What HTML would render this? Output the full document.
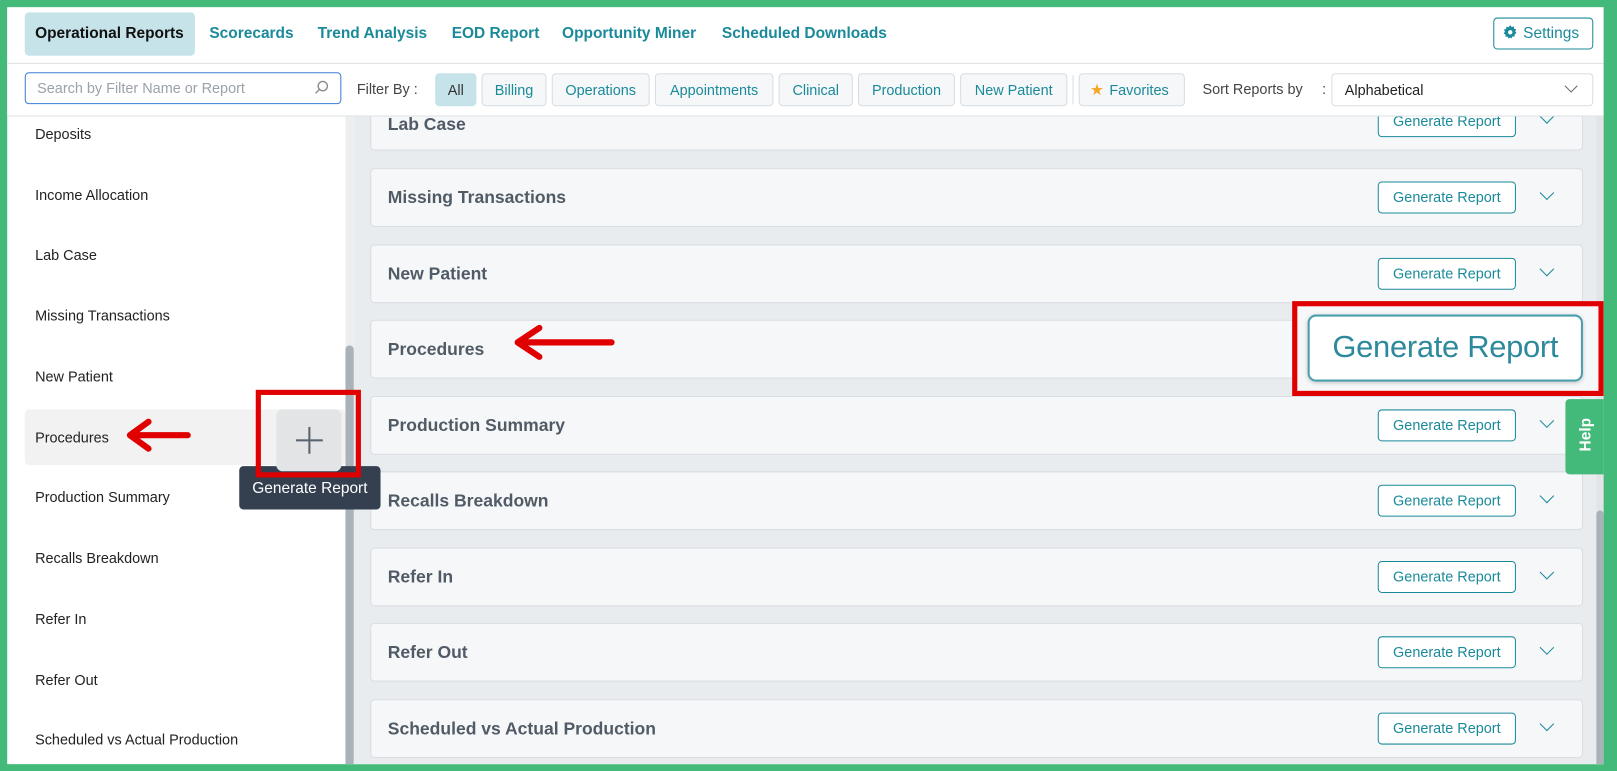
<!DOCTYPE html>
<html><head><meta charset="utf-8"><style>
*{box-sizing:border-box;margin:0;padding:0}
html,body{width:1617px;height:771px;overflow:hidden;background:#43b97a;font-family:"Liberation Sans",Arial,sans-serif}
#w{position:absolute;left:0;top:0;width:1568px;height:748px;transform:scale(1.03125);transform-origin:0 0;background:#43b97a}
.a{position:absolute}
.tab{position:absolute;top:12px;height:42px;line-height:42px;font-weight:bold;font-size:15px;color:#1a8a9a;white-space:nowrap}
.chip{position:absolute;top:71px;height:32px;line-height:30px;border:1px solid #d6dde2;border-radius:4px;background:#f5f7f8;color:#1a8a9a;font-size:14px;text-align:center}
.si{position:absolute;left:34px;font-size:14px;color:#222}
.card{position:absolute;left:359px;width:1176px;height:57px;background:#f6f7f9;border:1px solid #d8dde2;border-radius:4px}
.card .t{position:absolute;left:16px;top:0;line-height:55px;font-size:17px;font-weight:bold;color:#505b66}
.card .b{position:absolute;left:976px;top:12px;width:134px;height:31px;border:1px solid #1a8a9a;border-radius:4px;background:#fff;color:#1a8a9a;font-size:14px;line-height:29px;text-align:center}
.card .c{position:absolute;left:1135px;top:18px;width:10px;height:10px;border-right:1.5px solid #1a8a9a;border-bottom:1.5px solid #1a8a9a;transform:rotate(45deg)}
</style></head><body><div id="w">
<div class="a" style="left:7px;top:7px;width:1548px;height:734px;overflow:hidden;background:#fff">
<div class="a" style="left:-7px;top:-7px;width:1568px;height:748px">
 <div class="a" style="left:343px;top:113px;width:1212px;height:630px;background:#e9ecef"></div>
 <div class="a" style="left:335px;top:113px;width:8px;height:630px;background:#eceef0"></div>
 <div class="a" style="left:335px;top:335px;width:8px;height:410px;background:#a9b1b9;border-radius:4px"></div>
 <div class="a" style="left:1548px;top:113px;width:7px;height:630px;background:#e2e5e8"></div>
 <div class="a" style="left:1548px;top:495px;width:7px;height:250px;background:#a9b1b9;border-radius:4px"></div>

 <div class="a" style="left:24px;top:397px;width:311px;height:54px;background:#f2f2f2;border-radius:4px"></div>
 <div class="si" style="top:122px">Deposits</div>
 <div class="si" style="top:181px">Income Allocation</div>
 <div class="si" style="top:239px">Lab Case</div>
 <div class="si" style="top:298px">Missing Transactions</div>
 <div class="si" style="top:357px">New Patient</div>
 <div class="si" style="top:416px">Procedures</div>
 <div class="si" style="top:474px">Production Summary</div>
 <div class="si" style="top:533px">Recalls Breakdown</div>
 <div class="si" style="top:592px">Refer In</div>
 <div class="si" style="top:651px">Refer Out</div>
 <div class="si" style="top:709px">Scheduled vs Actual Production</div>

 <div class="card" style="top:89px"><div class="t" style="top:3px">Lab Case</div><div class="b">Generate Report</div><div class="c"></div></div>
 <div class="card" style="top:163px"><div class="t">Missing Transactions</div><div class="b">Generate Report</div><div class="c"></div></div>
 <div class="card" style="top:237px"><div class="t">New Patient</div><div class="b">Generate Report</div><div class="c"></div></div>
 <div class="card" style="top:310px"><div class="t">Procedures</div></div>
 <div class="card" style="top:384px"><div class="t">Production Summary</div><div class="b">Generate Report</div><div class="c"></div></div>
 <div class="card" style="top:457px"><div class="t">Recalls Breakdown</div><div class="b">Generate Report</div><div class="c"></div></div>
 <div class="card" style="top:531px"><div class="t">Refer In</div><div class="b">Generate Report</div><div class="c"></div></div>
 <div class="card" style="top:604px"><div class="t">Refer Out</div><div class="b">Generate Report</div><div class="c"></div></div>
 <div class="card" style="top:678px"><div class="t">Scheduled vs Actual Production</div><div class="b">Generate Report</div><div class="c"></div></div>

 <!-- header -->
 <div class="a" style="left:7px;top:7px;width:1548px;height:105px;background:#fff"></div>
 <div class="a" style="left:24px;top:12px;width:165px;height:42px;background:#c5e3e8;border-radius:4px"></div>
 <div class="tab" style="left:34px;color:#111">Operational Reports</div>
 <div class="tab" style="left:203px">Scorecards</div>
 <div class="tab" style="left:308px">Trend Analysis</div>
 <div class="tab" style="left:438px">EOD Report</div>
 <div class="tab" style="left:545px">Opportunity Miner</div>
 <div class="tab" style="left:700px">Scheduled Downloads</div>
 <div class="a" style="left:1448px;top:17px;width:97px;height:31px;border:1px solid #1a8a9a;border-radius:4px;color:#1a8a9a;font-size:15px;line-height:29px;padding-left:28px">Settings</div>
 <svg class="a" style="left:1457px;top:24px" width="15" height="15" viewBox="0 0 16 16"><path d="M8 0.5l1.4 1.8 2.2-.6.3 2.3 2.2.8-1 2.1 1.4 1.8-2 1.1.1 2.3-2.3-.1-.9 2.1L8 13l-1.8 1.4-.9-2.1-2.3.1.1-2.3-2-1.1 1.4-1.8-1-2.1 2.2-.8.3-2.3 2.2.6z" fill="#1a8a9a"/><circle cx="8" cy="7.8" r="2.3" fill="#fff"/></svg>
 <div class="a" style="left:7px;top:61px;width:1548px;height:1px;background:#dde2e6"></div>
 <div class="a" style="left:24px;top:70px;width:307px;height:31px;border:1px solid #3b7dd8;border-radius:4px;font-size:14px;color:#9aa2aa;line-height:29px;padding-left:11px">Search by Filter Name or Report</div>
 <svg class="a" style="left:304px;top:77px" width="16" height="16"><circle cx="9" cy="6.5" r="4.5" stroke="#888" stroke-width="1.3" fill="none"/><path d="M5.8 9.7L2 13.5" stroke="#888" stroke-width="1.3"/></svg>
 <div class="a" style="left:346px;top:78px;font-size:14px;color:#444">Filter By :</div>
 <div class="chip" style="left:422px;width:40px;background:#c5e3e8;border-color:#c5e3e8;color:#333">All</div>
 <div class="chip" style="left:467px;width:63px">Billing</div>
 <div class="chip" style="left:535px;width:95px">Operations</div>
 <div class="chip" style="left:635px;width:115px">Appointments</div>
 <div class="chip" style="left:755px;width:72px">Clinical</div>
 <div class="chip" style="left:832px;width:94px">Production</div>
 <div class="chip" style="left:931px;width:104px">New Patient</div>
 <div class="a" style="left:1040px;top:73px;width:1px;height:28px;background:#d6dde2"></div>
 <div class="chip" style="left:1046px;width:103px;padding-left:14px">Favorites</div>
 <div class="a" style="left:1057px;top:78px;color:#f5a623;font-size:15px">★</div>
 <div class="a" style="left:1166px;top:78px;font-size:14px;color:#444">Sort Reports by</div>
 <div class="a" style="left:1282px;top:78px;font-size:14px;color:#444">:</div>
 <div class="a" style="left:1291px;top:71px;width:254px;height:32px;border:1px solid #d6dde2;border-radius:4px;font-size:14px;color:#222;line-height:30px;padding-left:12px;background:#fff">Alphabetical</div>
 <div class="a" style="left:1519px;top:79px;width:9px;height:9px;border-right:1.3px solid #666;border-bottom:1.3px solid #666;transform:rotate(45deg)"></div>
 <div class="a" style="left:7px;top:112px;width:1548px;height:1px;background:#dde2e6"></div>

 <!-- Help tab -->
 <div class="a" style="left:1518px;top:387px;width:40px;height:73px;background:#43b97a;border-radius:4px 0 0 4px"></div>
 <div class="a" style="left:1518px;top:413px;width:40px;color:#fff;font-weight:bold;font-size:15px;transform:rotate(-90deg);text-align:center">Help</div>

 <!-- big callout -->
 <div class="a" style="left:1253px;top:292px;width:302px;height:92px;border:5px solid #e00000;background:#f6f7f9"></div>
 <div class="a" style="left:1268px;top:305px;width:267px;height:65px;border:2.5px solid #4a9fae;border-radius:8px;background:#fff;color:#2c8a9c;font-size:30px;line-height:60px;text-align:center;letter-spacing:-0.3px;box-shadow:0 1px 4px rgba(0,0,0,.2)">Generate Report</div>

 <!-- sidebar callout -->
 <div class="a" style="left:232px;top:452px;width:137px;height:42px;background:#344050;border-radius:4px;color:#fff;font-size:15px;text-align:center;line-height:44px">Generate Report</div>
 <div class="a" style="left:248px;top:378px;width:102px;height:85px;border:5px solid #e00000"></div>
 <div class="a" style="left:268px;top:397px;width:63px;height:60px;background:#e3e4e6;border-radius:6px"></div>
 <div class="a" style="left:287px;top:426px;width:26px;height:2px;background:#5a6470"></div>
 <div class="a" style="left:299px;top:414px;width:2px;height:26px;background:#5a6470"></div>

 <!-- arrows -->
 <svg class="a" style="left:118px;top:402px" width="72" height="44"><path d="M64 20 H14 M26 7 L8 20 L26 33" stroke="#e00000" stroke-width="6" fill="none" stroke-linecap="round" stroke-linejoin="round"/></svg>
 <svg class="a" style="left:493px;top:313px" width="110" height="44"><path d="M100 19 H14 M30 5 L9 19 L30 33" stroke="#e00000" stroke-width="6" fill="none" stroke-linecap="round" stroke-linejoin="round"/></svg>
</div></div>
</div></body></html>
